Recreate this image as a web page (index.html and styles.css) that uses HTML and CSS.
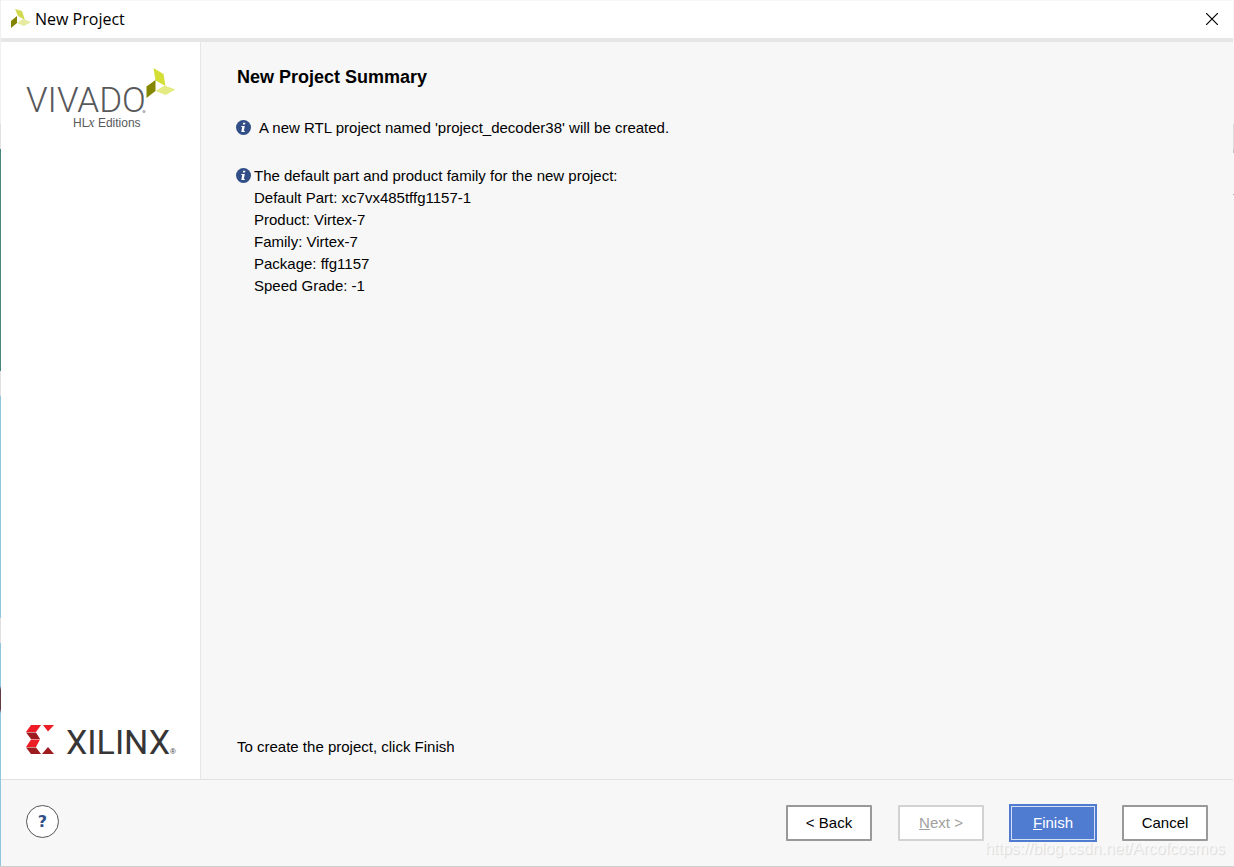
FILE: index.html
```
<!DOCTYPE html>
<html lang="en">

<head>
    <meta charset="utf-8">
    <title>New Project</title>
    <link rel="stylesheet" href="styles.css">
</head>

<body>

    <!-- Title bar -->
    <header class="titlebar">
        <svg class="app-icon" width="20" height="20" viewBox="0 0 20 20">
            <path fill="#d2db4f" d="M6 0l7 2 3 9-7-4z" />
            <path fill="#838500" d="M2 12l6-5v7l-6 5z" />
            <path fill="#e6eba0" d="M8 14l6-4 8 3-7 4z" />
        </svg>
        <span class="window-title">New Project</span>
        <button class="close" aria-label="Close">
            <svg width="12" height="12" viewBox="0 0 12 12">
                <path d="M0 0l12 12M12 0L0 12" stroke="#000" stroke-width="1.2" />
            </svg>
        </button>
    </header>

    <div class="content">
        <aside class="sidebar">
            <svg class="vivado" width="150" height="64" viewBox="0 0 150 64">
                <text class="vivado-name" x="0" y="45">VIVADO</text>
                <circle cx="118" cy="44.500" r="1" fill="none" stroke="#777" stroke-width=".8" />
                <text class="vivado-edition" x="47" y="60">HL<tspan class="edition-x">x</tspan> Editions</text>
                <path fill="#d3df36" d="M127.500 1l10 6 2 12-10-5.500z" />
                <path fill="#858700" d="M120.500 19.500l9-6.500v11l-9 7z" />
                <path fill="#e3eb82" d="M129.500 24l9-5.500 11 4-10 5.500z" />
            </svg>
            <svg class="xilinx" width="152" height="30" viewBox="0 0 152 30">
                <path fill="#ee1c25" d="M5 0h10l-5 7H0zM5 14.500h9L10 22H0zM17 0h11l-6 6.500z" />
                <path fill="#9e1b20" d="M0 7.500h10l4 6.500H5zM0 22.500h10l5 6.500H5zM16 29l6-7 6 7z" />
                <text class="xilinx-name" x="40" y="29">XILINX</text>
                <text class="registered" x="144" y="29">®</text>
            </svg>
        </aside>

        <main class="summary">
            <h1>New Project Summary</h1>
            <div class="note note-first">
                <svg class="info" width="15" height="15" viewBox="0 0 15 15">
                    <circle cx="7.500" cy="7.500" r="7.500" fill="#314f86" />
                    <path fill="#fff" d="M7.200 2.800h2.200l-.4 1.800H6.800zM5.500 6h3.300l-1 5h1.100l-.2 1H5.300l.9-5h-1z" />
                </svg>
                <p>A new RTL project named 'project_decoder38' will be created.</p>
            </div>
            <div class="note">
                <svg class="info" width="15" height="15" viewBox="0 0 15 15">
                    <circle cx="7.500" cy="7.500" r="7.500" fill="#314f86" />
                    <path fill="#fff" d="M7.200 2.800h2.200l-.4 1.800H6.800zM5.500 6h3.300l-1 5h1.100l-.2 1H5.300l.9-5h-1z" />
                </svg>
                <div>
                    <p>The default part and product family for the new project:</p>
                    <p>Default Part: xc7vx485tffg1157-1</p>
                    <p>Product: Virtex-7</p>
                    <p>Family: Virtex-7</p>
                    <p>Package: ffg1157</p>
                    <p>Speed Grade: -1</p>
                </div>
            </div>
            <p class="hint">To create the project, click Finish</p>
        </main>
    </div>

    <!-- Wizard buttons -->
    <footer class="actions">
        <button class="help" aria-label="Help">?</button>
        <div class="wizard-buttons">
            <button class="btn">&lt; Back</button>
            <button class="btn" disabled><u>N</u>ext &gt;</button>
            <button class="btn btn-primary"><u>F</u>inish</button>
            <button class="btn">Cancel</button>
        </div>
        <span class="watermark">https://blog.csdn.net/Arcofcosmos</span>
    </footer>

</body>

</html>
```

FILE: styles.css
```
* {
    box-sizing: border-box;
}

body {
    margin: 0;
    min-height: 100vh;
    padding: 1px;
    display: flex;
    flex-direction: column;
    font-family: "Liberation Sans", Arial, sans-serif;
    font-size: 15px;
    line-height: 22px;
    color: #000;
    /* desktop showing along the window edges */
    background:
        linear-gradient(#cfcfcf, #cfcfcf) bottom / 100% 1px no-repeat,
        linear-gradient(#f0f0f0 124px, #e0e0e0 124px, #e0e0e0 149px, #4a8580 149px, #4a8580 371px, #e0e0e0 371px, #e0e0e0 396px, #92c5e0 396px, #92c5e0 618px, #e0e0e0 618px, #e0e0e0 643px, #92c5e0 643px, #92c5e0 686px, #653b42 690px, #653b42 709px, #92c5e0 713px) left / 1px 100% no-repeat,
        linear-gradient(#f7f7f7 124px, #dcdcdc 124px, #dcdcdc 149px, #c4c4c4 149px, #c4c4c4 153px, #f7f7f7 153px, #f7f7f7 194px, #aaa 194px, #aaa 195px, #f7f7f7 195px) right / 1px 100% no-repeat,
        #f7f7f7;
}

p {
    margin: 0;
}

button {
    padding: 0;
    font: inherit;
    cursor: pointer;
}

.titlebar {
    display: flex;
    align-items: center;
    height: 41px;
    padding: 0 15px 2px 8px;
    background: #fff;
    border-bottom: 4px solid #e6e6e6;
}

.app-icon {
    overflow: visible;
}

.window-title {
    margin-left: 6px;
    font-family: "Open Sans", "Segoe UI", sans-serif;
    font-size: 16px;
}

.close {
    display: flex;
    margin-left: auto;
    border: 0;
    background: none;
}

.content {
    flex: 1;
    display: flex;
}

.sidebar {
    width: 200px;
    padding: 25px 24px 24px 25px;
    display: flex;
    flex-direction: column;
    justify-content: space-between;
    background: #fff;
    border-right: 1px solid #e6e6e6;
}

.sidebar svg {
    overflow: visible;
}

.vivado-name {
    font-family: Roboto, sans-serif;
    font-size: 35px;
    font-weight: 300;
    fill: #58595b;
}

.vivado-edition {
    font-size: 12px;
    fill: #58595b;
}

.edition-x {
    font-family: "Liberation Serif", serif;
    font-size: 14px;
    font-style: italic;
}

.xilinx-name {
    font-family: Roboto, sans-serif;
    font-size: 34px;
    fill: #373535;
}

.registered {
    font-size: 8px;
    fill: #373535;
}

.summary {
    flex: 1;
    padding: 24px 35px 21px;
    display: flex;
    flex-direction: column;
}

h1 {
    margin: 0 0 29px 1px;
    font-size: 18px;
    line-height: 22px;
}

.note {
    display: flex;
    gap: 3px;
}

.note-first {
    gap: 8px;
    margin-bottom: 26px;
}

.info {
    flex: none;
    margin-top: 3px;
}

.hint {
    margin: auto 0 0 1px;
}

.actions {
    position: relative;
    display: flex;
    align-items: center;
    justify-content: space-between;
    height: 87px;
    padding: 0 25px;
    border-top: 1px solid #e2e2e2;
}

.help {
    width: 33px;
    height: 33px;
    margin-bottom: 3px;
    border: 1px solid #555;
    border-radius: 50%;
    background: #fff;
    color: #314f86;
    font-family: "DejaVu Sans", sans-serif;
    font-size: 16px;
    font-weight: bold;
}

.wizard-buttons {
    display: flex;
    align-items: center;
    gap: 26px;
}

.btn {
    width: 86px;
    height: 36px;
    border: 2px solid #989a99;
    border-radius: 1px;
    background: #fff;
    color: #000;
}

.btn:disabled {
    border-color: #d2d2d2;
    color: #a0a0a0;
    cursor: default;
}

.btn-primary {
    width: 88px;
    height: 38px;
    margin: 0 -1px;
    border-color: #4f7bd0;
    border-radius: 0;
    box-shadow: inset 0 0 0 1px #d5e0f5;
    background: #4f7bd0;
    color: #fff;
}

.watermark {
    position: absolute;
    right: 8px;
    bottom: 6px;
    color: rgba(255, 255, 255, 0.6);
    font-size: 16px;
    text-shadow: 1px 1px 1px rgba(0, 0, 0, 0.12);
    pointer-events: none;
}
```
